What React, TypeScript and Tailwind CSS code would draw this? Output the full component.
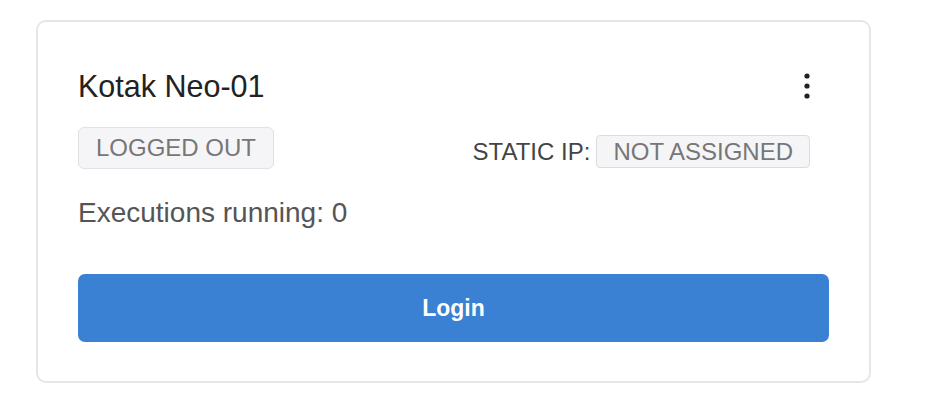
export default function App() {
  return (
    <div
      className="min-h-[406px] w-[926px] bg-white pl-[36px] pt-[20px]"
      style={{ fontFamily: '"Liberation Sans", Arial, sans-serif' }}
    >
      <div className="h-[363px] w-[835px] rounded-[10px] border-2 border-[#e6e6ea] px-[40px] pt-[46px]">
        {/* Header */}
        <div className="flex h-[36px] items-center justify-between">
          <h2 className="text-[30.5px] leading-[36px] text-[#222]">Kotak Neo-01</h2>
          <button className="mr-[18px] flex h-[30px] w-[8px] items-center justify-center">
            <svg width="6" height="26" viewBox="0 0 6 26" fill="#222">
              <circle cx="3" cy="3" r="2.6" />
              <circle cx="3" cy="13" r="2.6" />
              <circle cx="3" cy="23" r="2.6" />
            </svg>
          </button>
        </div>

        {/* Status row */}
        <div className="mt-[23px] flex items-start justify-between">
          <span className="rounded-[6px] border border-[#e2e2e6] bg-[#f5f5f7] px-[17px] py-[6px] text-[24px] leading-[28px] text-[#777]">
            LOGGED OUT
          </span>
          <div className="mr-[19px] mt-[8px] flex items-center gap-[6px]">
            <span className="text-[24px] leading-[25px] text-[#444]">STATIC IP:</span>
            <span className="rounded-[4px] border border-[#dcdce0] bg-[#f5f5f7] px-[16px] py-[3px] text-[24px] leading-[25px] text-[#777]">
              NOT ASSIGNED
            </span>
          </div>
        </div>

        <p className="mt-[28px] text-[28px] leading-[32px] text-[#555]">Executions running: 0</p>

        <button className="mt-[45px] flex h-[68px] w-full items-center justify-center rounded-[7px] bg-[#3a80d3] text-[23px] font-bold text-white">
          Login
        </button>
      </div>
    </div>
  );
}
